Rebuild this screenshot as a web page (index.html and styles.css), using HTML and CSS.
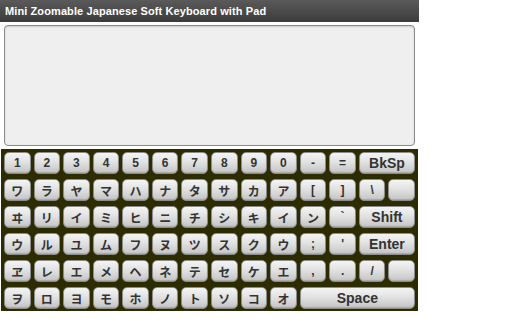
FILE: index.html
```html
<!DOCTYPE html>
<html>
<head>
<meta charset="utf-8">
<link rel="stylesheet" href="styles.css">
</head>
<body>
<div class="app">
  <div class="titlebar">Mini Zoomable Japanese Soft Keyboard with Pad</div>
  <div class="pad"></div>
  <div class="keyboard">
    <div class="key">1</div><div class="key">2</div><div class="key">3</div><div class="key">4</div><div class="key">5</div><div class="key">6</div><div class="key">7</div><div class="key">8</div><div class="key">9</div><div class="key">0</div><div class="key">-</div><div class="key">=</div><div class="key wide2 word">BkSp</div>
    <div class="key kana">ワ</div><div class="key kana">ラ</div><div class="key kana">ヤ</div><div class="key kana">マ</div><div class="key kana">ハ</div><div class="key kana">ナ</div><div class="key kana">タ</div><div class="key kana">サ</div><div class="key kana">カ</div><div class="key kana">ア</div><div class="key">[</div><div class="key">]</div><div class="key">\</div><div class="key"></div>
    <div class="key kana">ヰ</div><div class="key kana">リ</div><div class="key kana">イ</div><div class="key kana">ミ</div><div class="key kana">ヒ</div><div class="key kana">ニ</div><div class="key kana">チ</div><div class="key kana">シ</div><div class="key kana">キ</div><div class="key kana">イ</div><div class="key kana">ン</div><div class="key">`</div><div class="key wide2 word">Shift</div>
    <div class="key kana">ウ</div><div class="key kana">ル</div><div class="key kana">ユ</div><div class="key kana">ム</div><div class="key kana">フ</div><div class="key kana">ヌ</div><div class="key kana">ツ</div><div class="key kana">ス</div><div class="key kana">ク</div><div class="key kana">ウ</div><div class="key">;</div><div class="key">'</div><div class="key wide2 word">Enter</div>
    <div class="key kana">ヱ</div><div class="key kana">レ</div><div class="key kana">エ</div><div class="key kana">メ</div><div class="key kana">ヘ</div><div class="key kana">ネ</div><div class="key kana">テ</div><div class="key kana">セ</div><div class="key kana">ケ</div><div class="key kana">エ</div><div class="key">,</div><div class="key">.</div><div class="key">/</div><div class="key"></div>
    <div class="key kana">ヲ</div><div class="key kana">ロ</div><div class="key kana">ヨ</div><div class="key kana">モ</div><div class="key kana">ホ</div><div class="key kana">ノ</div><div class="key kana">ト</div><div class="key kana">ソ</div><div class="key kana">コ</div><div class="key kana">オ</div><div class="key wide4 word">Space</div>
  </div>
</div>
</body>
</html>
```
FILE: styles.css
```css
html, body {
  margin: 0;
  padding: 0;
  background: #ffffff;
}
.app {
  width: 419px;
  font-family: "Liberation Sans", Arial, sans-serif;
}
.titlebar {
  height: 22px;
  line-height: 22px;
  background: linear-gradient(#5a5a5a, #3c3c3c);
  color: #ffffff;
  font-weight: bold;
  font-size: 11px;
  padding-left: 5px;
  letter-spacing: 0.1px;
}
.pad {
  margin: 3px 4px 3px 4px;
  height: 119px;
  width: 409px;
  background: #efefef;
  border: 1px solid #8a8a8a;
  border-radius: 4px;
  box-shadow: inset 0 1px 2px rgba(0,0,0,0.15);
}
.keyboard {
  margin-left: 1px;
  width: 411px;
  height: 157px;
  background: #2d2b00;
  padding: 3px 3px 2px 3px;
  display: grid;
  grid-template-columns: repeat(14, 1fr);
  grid-auto-rows: 22px;
  column-gap: 3px;
  row-gap: 5px;
}
.key {
  border: 1px solid #8c8c8c;
  border-radius: 5px;
  background: linear-gradient(#f4f4f4 0%, #e2e2e2 45%, #c4c4c4 100%);
  box-shadow: inset 0 -1px 1px rgba(0,0,0,0.15);
  display: flex;
  align-items: center;
  justify-content: center;
  font-size: 12px;
  font-weight: bold;
  color: #333333;
  box-sizing: border-box;
}
.kana {
  font-family: "Noto Sans CJK JP", sans-serif;
  font-size: 12px;
  font-weight: bold;
}
.word {
  font-size: 14px;
}
.wide2 {
  grid-column: span 2;
}
.wide4 {
  grid-column: span 4;
}
```
